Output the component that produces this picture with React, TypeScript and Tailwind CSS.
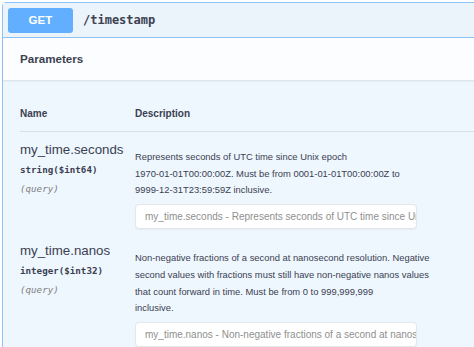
const sans = { fontFamily: '"Liberation Sans", Arial, sans-serif' }
const mono = { fontFamily: '"DejaVu Sans Mono", "Liberation Mono", monospace' }

type Param = {
  name: string
  type: string
  lines: string[]
  placeholder: string
}

const params: Param[] = [
  {
    name: 'my_time.seconds',
    type: 'string($int64)',
    lines: [
      'Represents seconds of UTC time since Unix epoch',
      '1970-01-01T00:00:00Z. Must be from 0001-01-01T00:00:00Z to',
      '9999-12-31T23:59:59Z inclusive.',
    ],
    placeholder: 'my_time.seconds - Represents seconds of UTC time since Unix epoch',
  },
  {
    name: 'my_time.nanos',
    type: 'integer($int32)',
    lines: [
      'Non-negative fractions of a second at nanosecond resolution. Negative',
      'second values with fractions must still have non-negative nanos values',
      'that count forward in time. Must be from 0 to 999,999,999',
      'inclusive.',
    ],
    placeholder: 'my_time.nanos - Non-negative fractions of a second at nanosecond resolution',
  },
]

export default function App() {
  return (
    <div className="w-full h-[347px] overflow-hidden bg-white" style={sans}>
      <div className="ml-[2px] mt-[2px] w-[520px] border border-[#8cc3f7] rounded-[4px] bg-[#eef6fe] text-[#3b4151]">
        {/* Summary */}
        <div className="h-[35px] flex items-center px-[5px] bg-[#ebf3fb] border-b border-[#8cc3f7]">
          <span className="w-[65px] h-[25px] flex items-center justify-center rounded-[3px] bg-[#61affe] text-white text-[11.6px] font-bold">
            GET
          </span>
          <span className="ml-[10px] text-[12px] font-bold text-[#3b4151]" style={mono}>
            /timestamp
          </span>
        </div>

        {/* Section header */}
        <div className="h-[42px] flex items-center px-[17px] bg-[#fbfdff] shadow-[0_1px_2px_rgba(0,0,0,0.1)]">
          <span className="text-[11.6px] font-bold">Parameters</span>
        </div>

        {/* Table */}
        <div className="pl-[17px] pt-[28px]">
          <div className="flex pb-[11px] border-b border-[#d9dfe6] text-[10px] font-bold leading-[12px]">
            <div className="w-[115px]">Name</div>
            <div>Description</div>
          </div>

          {params.map((p) => (
            <div key={p.name} className="flex pb-[4px]">
              <div className="w-[115px] pt-[10px]">
                <div className="text-[13.3px] leading-[16px]">{p.name}</div>
                <div className="mt-[6px] text-[9.2px] font-bold leading-[12px]" style={mono}>
                  {p.type}
                </div>
                <div className="mt-[7px] text-[9.2px] italic leading-[12px] text-[#808080]" style={mono}>
                  (query)
                </div>
              </div>
              <div className="pt-[17px]">
                <div className="text-[9.4px] leading-[16.7px] whitespace-nowrap">
                  {p.lines.map((l) => (
                    <div key={l}>{l}</div>
                  ))}
                </div>
                <div className="mt-[5px] w-[282px] h-[25px] flex items-center px-[9px] bg-white border border-[#e3e6ea] rounded-[4px] shadow-[0_1px_1px_rgba(0,0,0,0.04)] overflow-hidden">
                  <span className="text-[10px] text-[#8f8f8f] whitespace-nowrap">{p.placeholder}</span>
                </div>
              </div>
            </div>
          ))}
        </div>
      </div>
    </div>
  )
}
